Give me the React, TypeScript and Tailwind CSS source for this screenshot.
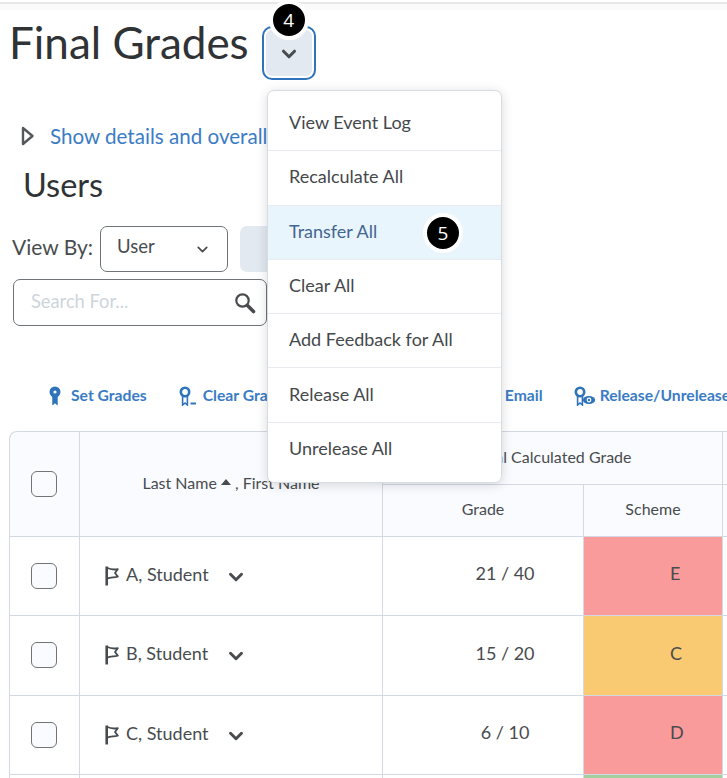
import { ChevronDown } from "lucide-react";

const menuItems = ["View Event Log", "Recalculate All", "Transfer All", "Clear All", "Add Feedback for All", "Release All", "Unrelease All"];

const students = [
  { name: "A, Student", grade: "21 / 40", scheme: "E", color: "bg-[#f99a9b]" },
  { name: "B, Student", grade: "15 / 20", scheme: "C", color: "bg-[#f9ca72]" },
  { name: "C, Student", grade: "6 / 10", scheme: "D", color: "bg-[#f99a9b]" },
];

function Badge({ n }: { n: number }) {
  return (
    <div className="flex h-[40px] w-[40px] items-center justify-center rounded-full border-[4px] border-white bg-black font-['Open_Sans',sans-serif] text-[19px] text-white">
      {n}
    </div>
  );
}

function Checkbox() {
  return <div className="ml-[21px] h-[26px] w-[26px] rounded-[6px] border border-[#6e7477] bg-[#f9fbff]" />;
}

function FlagIcon() {
  return (
    <svg width="14" height="20" viewBox="0 0 14 20" className="shrink-0">
      <path d="M1.7 0.5V19.5" stroke="#494c4e" strokeWidth="2.6" fill="none" />
      <path d="M2 1.8C5 3.4 8 4 12.8 3.2L10 7L12.8 10.6C8.5 11.6 5.5 11.2 2 12.6" stroke="#494c4e" strokeWidth="1.8" fill="none" strokeLinejoin="round" />
    </svg>
  );
}

function Ribbon({ minus, eye }: { minus?: boolean; eye?: boolean }) {
  return (
    <svg width="22" height="20" viewBox="0 0 22 20" className="shrink-0">
      <circle cx="6" cy="6" r="4.2" stroke="#2f74bb" strokeWidth="2.6" fill={minus || eye ? "none" : "#2f74bb"} />
      {!minus && !eye && <circle cx="6" cy="6" r="1.6" fill="#fff" />}
      <path d="M3.6 10V19L6 17L8.4 19V10" fill={minus || eye ? "none" : "#2f74bb"} stroke="#2f74bb" strokeWidth={minus || eye ? 1.6 : 0.6} />
      {minus && <path d="M11.5 17.5H17" stroke="#2f74bb" strokeWidth="2" />}
      {eye && (
        <>
          <ellipse cx="15" cy="14" rx="6.2" ry="4" fill="#2f74bb" />
          <circle cx="15" cy="14" r="2.4" fill="#fff" />
          <circle cx="15" cy="14" r="1.2" fill="#2f74bb" />
        </>
      )}
    </svg>
  );
}

function SearchIcon() {
  return (
    <svg width="22" height="22" viewBox="0 0 22 22" className="shrink-0">
      <circle cx="8.5" cy="8.5" r="6.2" fill="none" stroke="#494c4e" strokeWidth="2.2" />
      <path d="M13.5 13.5L19.5 19.5" stroke="#494c4e" strokeWidth="3.6" strokeLinecap="round" />
    </svg>
  );
}

export default function App() {
  return (
    <div className="relative h-[778px] w-[727px] overflow-hidden bg-white font-['Lato',sans-serif] text-[#494c4e]">
      {/* Top strip */}
      <div className="mt-[2px] h-[8px] border-t-2 border-[#e6e8ea] bg-[#fafafa]" />

      {/* Title */}
      <div className="flex h-[70px] items-start pl-[9px]">
        <h1 className="mt-[4px] whitespace-nowrap text-[44px] leading-[56px] text-[#303336]">Final Grades</h1>
        <div className="relative ml-[13px] mt-[16px]">
          <button className="flex h-[54px] w-[54px] items-center justify-center rounded-[10px] border-2 border-[#2f74bb] bg-[#e3e9f1] shadow-[inset_0_0_0_2px_#ffffff]">
            <ChevronDown size={22} strokeWidth={3.4} className="mt-[2px] text-[#494c4e]" />
          </button>
          <div className="absolute left-[7px] top-[-26px]">
            <Badge n={4} />
          </div>
        </div>
      </div>

      {/* Details link */}
      <div className="mt-[43px] flex h-[26px] items-center pl-[21px]">
        <svg width="14" height="20" viewBox="0 0 14 20">
          <path d="M2 2L11.5 10L2 18Z" fill="none" stroke="#54585a" strokeWidth="2.4" strokeLinejoin="round" />
        </svg>
        <a className="ml-[15px] whitespace-nowrap text-[20.6px] text-[#3a7cc4]">Show details and overall</a>
      </div>

      <h2 className="mt-[14px] pl-[23px] text-[32.5px] leading-[44px] text-[#303336]">Users</h2>

      {/* View by */}
      <div className="mt-[19px] flex h-[46px] items-center pl-[12px]">
        <span className="mb-[4px] text-[21px] text-[#494c4e]">View By:</span>
        <div className="ml-[7px] flex h-[46px] w-[128px] items-center justify-between rounded-[7px] border border-[#6e7477] pl-[16px] pr-[16px]">
          <span className="mb-[5px] text-[18.5px]">User</span>
          <ChevronDown size={17} strokeWidth={2.4} />
        </div>
        <div className="ml-[12px] h-[46px] w-[60px] rounded-[7px] bg-[#e3e9f1]" />
      </div>

      {/* Search */}
      <div className="ml-[13px] mt-[7px] flex h-[47px] w-[254px] items-center justify-between rounded-[7px] border border-[#6e7477] pl-[17px] pr-[10px]">
        <span className="mb-[2px] text-[18.3px] text-[#cdd5dc]">Search For...</span>
        <SearchIcon />
      </div>

      {/* Actions */}
      <div className="mt-[60px] flex h-[20px] items-center whitespace-nowrap pl-[49px] text-[15.7px] font-bold text-[#3a7cc4]">
        <Ribbon />
        <span>Set Grades</span>
        <div className="ml-[32px]">
          <Ribbon minus />
        </div>
        <span className="ml-[2px]">Clear Grades</span>
        <span className="ml-[213px]">Email</span>
        <div className="ml-[31px]">
          <Ribbon eye />
        </div>
        <span className="ml-[4px]">Release/Unrelease</span>
      </div>

      {/* Table */}
      <div className="ml-[9px] mt-[25px]">
        <table className="w-[759px] table-fixed border-separate border-spacing-0 text-[#494c4e]">
          <colgroup>
            <col className="w-[70px]" />
            <col className="w-[303px]" />
            <col className="w-[201px]" />
            <col className="w-[139px]" />
            <col className="w-[46px]" />
          </colgroup>
          <thead className="bg-[#f9fbff] text-[16px]">
            <tr className="h-[53.5px]">
              <th rowSpan={2} className="rounded-tl-[8px] border-y border-l border-[#d2d9e2] font-normal">
                <Checkbox />
              </th>
              <th rowSpan={2} className="border-y border-l border-[#d2d9e2] font-normal">
                <span className="relative bottom-[1px] inline-flex items-center whitespace-nowrap">
                  Last Name
                  <span className="mx-[4px] mb-[1px] h-0 w-0 border-x-[5px] border-b-[6px] border-x-transparent border-b-[#494c4e]" />
                  , First Name
                </span>
              </th>
              <th colSpan={2} className="border-y border-l border-[#d2d9e2] pb-[2px] font-normal">
                <span className="whitespace-nowrap">Final Calculated Grade</span>
              </th>
              <th className="border-y border-l border-[#d2d9e2]" />
            </tr>
            <tr className="h-[52px]">
              <th className="border-b border-l border-[#d2d9e2] pb-[2px] font-normal">Grade</th>
              <th className="border-b border-l border-[#d2d9e2] pb-[2px] font-normal">Scheme</th>
              <th className="border-b border-l border-[#d2d9e2]" />
            </tr>
          </thead>
          <tbody className="text-[18px]">
            {students.map((s) => (
              <tr key={s.name} className="h-[79.5px]">
                <td className="border-b border-l border-[#d2d9e2]">
                  <Checkbox />
                </td>
                <td className="border-b border-l border-[#d2d9e2] pl-[25px]">
                  <div className="flex items-center">
                    <FlagIcon />
                    <span className="mb-[3px] ml-[7px] w-[99px] whitespace-nowrap">{s.name}</span>
                    <ChevronDown size={22} strokeWidth={3.2} className="mt-[2px]" />
                  </div>
                </td>
                <td className="border-b border-l border-[#d2d9e2] pb-[4px] pl-[44px] text-center">{s.grade}</td>
                <td className={`border-b border-l border-[#d2d9e2] pb-[4px] pl-[86px] ${s.color}`}>{s.scheme}</td>
                <td className="border-b border-l border-[#d2d9e2]" />
              </tr>
            ))}
            <tr className="h-[40px]">
              <td className="border-l border-[#d2d9e2]" />
              <td className="border-l border-[#d2d9e2]" />
              <td className="border-l border-[#d2d9e2]" />
              <td className="border-l border-[#d2d9e2] bg-[#a3cf9f]" />
              <td className="border-l border-[#d2d9e2]" />
            </tr>
          </tbody>
        </table>
      </div>

      {/* Dropdown menu */}
      <div className="absolute left-[267px] top-[90px] w-[235px] overflow-hidden rounded-[7px] border border-[#d5dce4] bg-white pb-[5px] pt-[6px] text-[18px] shadow-[0_2px_12px_rgba(0,0,0,0.15)]">
        {menuItems.map((item, i) => (
          <div
            key={item}
            className={`flex h-[54.3px] items-center pb-[2px] pl-[21px] ${i < menuItems.length - 1 ? "border-b border-[#e8ebef]" : ""} ${
              item === "Transfer All" ? "bg-[#e8f5fc] text-[#44658f]" : "text-[#45484b]"
            }`}
          >
            {item}
          </div>
        ))}
      </div>

      <div className="absolute left-[423px] top-[213px]">
        <Badge n={5} />
      </div>
    </div>
  );
}
